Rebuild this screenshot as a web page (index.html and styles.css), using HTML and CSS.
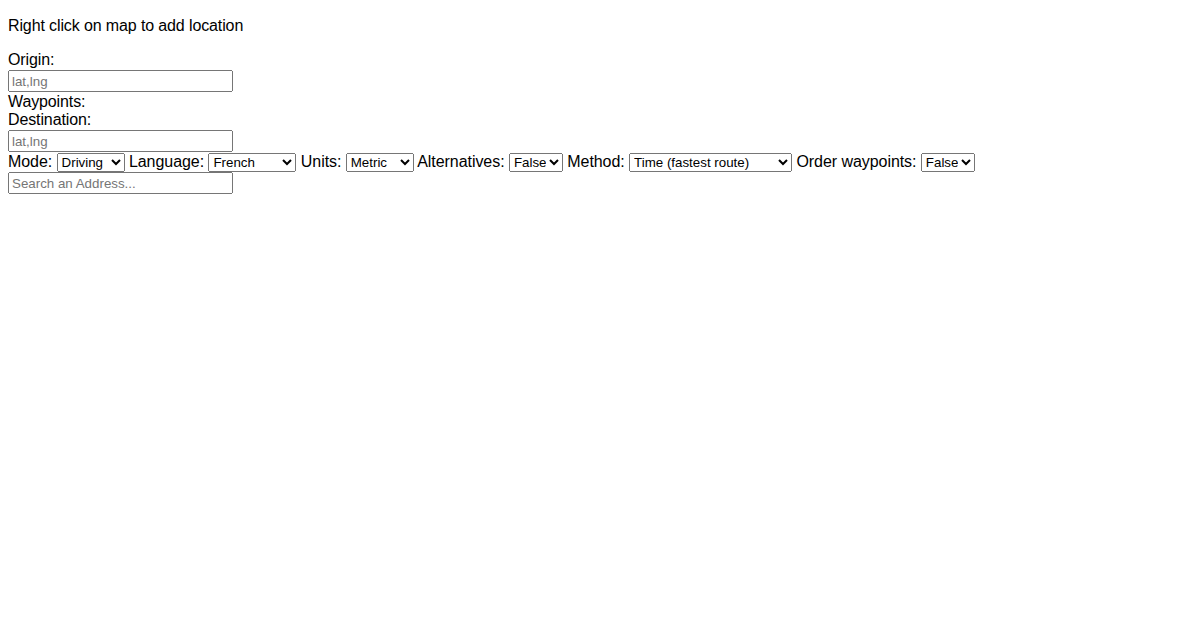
FILE: index.html
```html
<!DOCTYPE html>
<html>
<head>
<meta charset="utf-8">
<link rel="stylesheet" href="styles.css">
</head>
<body>
<p class="hint">Right click on map to add location</p>
<div class="panel">
  <div class="label">Origin:</div>
  <input class="coord" type="text" placeholder="lat,lng">
  <div class="label">Waypoints:</div>
  <div class="label">Destination:</div>
  <input class="coord" type="text" placeholder="lat,lng">
  <div class="opts">Mode: <select class="s-mode"><option>Driving</option><option>Walking</option><option>Transit</option></select> Language: <select class="s-lang"><option>French</option><option>English</option><option>Portuguese</option></select> Units: <select class="s-units"><option>Metric</option><option>Imperial</option></select> Alternatives: <select class="s-bool"><option>False</option><option>True</option></select> Method: <select class="s-method"><option>Time (fastest route)</option><option>Distance (shortest route)</option></select> Order waypoints: <select class="s-bool"><option>False</option><option>True</option></select></div>
  <input class="coord search" type="text" placeholder="Search an Address...">
</div>
</body>
</html>
```

FILE: styles.css
```css
html, body {
  background: #fff;
}
body {
  margin: 0;
  padding: 8px;
  font-family: "Liberation Sans", Arial, sans-serif;
  font-size: 16px;
  letter-spacing: -0.12px;
  color: #000;
}
.hint {
  margin: 9px 0 16px;
}
.coord {
  display: block;
  width: 225px;
  height: 22px;
  box-sizing: border-box;
  font-family: "Liberation Sans", Arial, sans-serif;
  font-size: 13.333px;
  letter-spacing: 0;
  margin: 1px 0;
}
.coord.search {
  margin-top: 0;
}
.opts {
  letter-spacing: -0.06px;
}
.opts select {
  font-family: "Liberation Sans", Arial, sans-serif;
  font-size: 13.333px;
  letter-spacing: 0;
  margin: 0;
}
.s-mode { width: 68px; }
.s-lang { width: 88px; }
.s-units { width: 68px; }
.s-bool { width: 54px; }
.s-method { width: 163px; }
```
